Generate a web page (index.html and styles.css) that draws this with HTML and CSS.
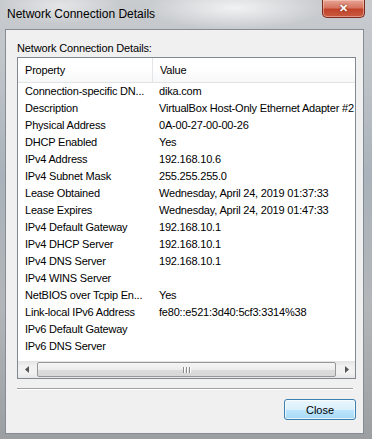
FILE: index.html
```html
<!DOCTYPE html>
<html>
<head>
    <meta charset="utf-8">
    <title>Network Connection Details</title>
    <link rel="stylesheet" href="styles.css">
</head>
<body>
    <div class="window">
        <div class="titlebar">
            <span class="title">Network Connection Details</span>
            <div class="close-x">&#x2715;</div>
        </div>
        <div class="client">
            <div class="label">Network Connection Details:</div>
            <div class="list">
                <div class="header">
                    <div class="prop">Property</div>
                    <div class="val">Value</div>
                </div>
                <div class="rows">
                    <div class="row"><div class="prop">Connection-specific DN...</div><div class="val">dika.com</div></div>
                    <div class="row"><div class="prop">Description</div><div class="val">VirtualBox Host-Only Ethernet Adapter #2</div></div>
                    <div class="row"><div class="prop">Physical Address</div><div class="val">0A-00-27-00-00-26</div></div>
                    <div class="row"><div class="prop">DHCP Enabled</div><div class="val">Yes</div></div>
                    <div class="row"><div class="prop">IPv4 Address</div><div class="val">192.168.10.6</div></div>
                    <div class="row"><div class="prop">IPv4 Subnet Mask</div><div class="val">255.255.255.0</div></div>
                    <div class="row"><div class="prop">Lease Obtained</div><div class="val">Wednesday, April 24, 2019 01:37:33</div></div>
                    <div class="row"><div class="prop">Lease Expires</div><div class="val">Wednesday, April 24, 2019 01:47:33</div></div>
                    <div class="row"><div class="prop">IPv4 Default Gateway</div><div class="val">192.168.10.1</div></div>
                    <div class="row"><div class="prop">IPv4 DHCP Server</div><div class="val">192.168.10.1</div></div>
                    <div class="row"><div class="prop">IPv4 DNS Server</div><div class="val">192.168.10.1</div></div>
                    <div class="row"><div class="prop">IPv4 WINS Server</div><div class="val"></div></div>
                    <div class="row"><div class="prop">NetBIOS over Tcpip En...</div><div class="val">Yes</div></div>
                    <div class="row"><div class="prop">Link-local IPv6 Address</div><div class="val">fe80::e521:3d40:5cf3:3314%38</div></div>
                    <div class="row"><div class="prop">IPv6 Default Gateway</div><div class="val"></div></div>
                    <div class="row"><div class="prop">IPv6 DNS Server</div><div class="val"></div></div>
                </div>
                <div class="hscroll">
                    <div class="arrow"><svg width="4" height="7" viewBox="0 0 4 7"><path d="M4 0 L0 3.5 L4 7 Z" fill="#555"/></svg></div>
                    <div class="thumb"><span class="grip"></span><span class="grip"></span><span class="grip"></span></div>
                    <div class="arrow"><svg width="4" height="7" viewBox="0 0 4 7"><path d="M0 0 L4 3.5 L0 7 Z" fill="#555"/></svg></div>
                </div>
            </div>
            <div class="separator"></div>
            <div class="buttons">
                <button class="button">Close</button>
            </div>
        </div>
    </div>
</body>
</html>
```
FILE: styles.css
```css
html, body {
    margin: 0;
    padding: 0;
    font-family: "Liberation Sans", Arial, sans-serif;
    background: #b9bec3;
}

.window {
    width: 372px;
    height: 439px;
    box-sizing: border-box;
    padding: 0 8px 5px 5px;
    display: flex;
    flex-direction: column;
    background:
        radial-gradient(ellipse 90px 22px at 235px 8px, rgba(255,255,255,0.75), rgba(255,255,255,0)),
        radial-gradient(ellipse 60px 18px at 60px 6px, rgba(255,255,255,0.5), rgba(255,255,255,0)),
        linear-gradient(180deg, #c9cccf 0, #bfc4c9 15%, #a9b2ba 40%, #b3b6b9 70%, #9c9fa2 100%);
}

.titlebar {
    height: 29px;
    display: flex;
    justify-content: space-between;
    align-items: flex-start;
}

.title {
    font-size: 12px;
    line-height: 14px;
    margin: 7px 0 0 2px;
    color: #000;
}

.close-x {
    width: 43px;
    height: 18px;
    flex: none;
    margin-right: -1px;
    box-sizing: border-box;
    border: 1px solid #7b2a1e;
    border-top: none;
    border-radius: 0 0 5px 5px;
    background: linear-gradient(180deg, #e6a595 0, #d77560 45%, #c0432a 55%, #c85a3e 100%);
    box-shadow: inset 0 0 0 1px rgba(255,220,210,0.45);
    color: #fff;
    font-size: 11px;
    font-weight: bold;
    line-height: 16px;
    text-align: center;
    text-shadow: 0 0 2px #6a1a10;
}

.client {
    flex: 1;
    background: #f0f0f0;
    border: 1px solid #858c93;
    padding: 11px 7px 0 11px;
    display: flex;
    flex-direction: column;
}

.label {
    font-size: 11px;
    line-height: 14px;
    margin-bottom: 2px;
    color: #000;
    letter-spacing: -0.15px;
}

.list {
    height: 322px;
    box-sizing: border-box;
    border: 1px solid #828790;
    background: #fff;
    display: flex;
    flex-direction: column;
    font-size: 11px;
    letter-spacing: -0.2px;
    color: #000;
    overflow: hidden;
}

.header {
    height: 25px;
    box-sizing: border-box;
    border-bottom: 1px solid #e2e3e5;
    background: linear-gradient(180deg, #fff 0, #fff 40%, #f7f8f9 100%);
    display: flex;
    align-items: stretch;
    line-height: 24px;
}

.header .prop {
    border-right: 1px solid #e3e5e7;
}

.prop {
    width: 127px;
    flex: none;
    padding-left: 7px;
    white-space: nowrap;
}

.val {
    padding-left: 7px;
    white-space: nowrap;
}

.rows {
    flex: 1;
}

.row {
    height: 17px;
    line-height: 17px;
    display: flex;
}

.hscroll {
    height: 17px;
    display: flex;
    align-items: stretch;
    background: linear-gradient(180deg, #e3e3e3 0, #f1f1f1 30%, #f1f1f1 70%, #e6e6e6 100%);
}

.arrow {
    width: 17px;
    display: flex;
    align-items: center;
    justify-content: center;
}

.thumb {
    flex: 1;
    margin: 1px 2px;
    border: 1px solid #979797;
    border-radius: 2px;
    background: linear-gradient(180deg, #f5f5f5 0, #ececec 50%, #dcdcdc 51%, #d8d8d8 100%);
    display: flex;
    align-items: center;
    justify-content: center;
    gap: 2px;
}

.grip {
    width: 1px;
    height: 6px;
    background: #8a8a8a;
    box-shadow: 1px 0 0 #fff;
}

.separator {
    margin: 9px 3px 0 0;
    height: 1px;
    background: #a0a0a0;
    border-bottom: 1px solid #fff;
}

.buttons {
    display: flex;
    justify-content: flex-end;
    margin-top: 9px;
}

.button {
    width: 72px;
    height: 21px;
    box-sizing: border-box;
    border: 1px solid #3c7fb1;
    border-radius: 3px;
    background: linear-gradient(180deg, #eaf6fd 0, #d9f0fc 50%, #bee6fd 51%, #a7d9f5 100%);
    box-shadow: inset 0 0 0 1px rgba(255,255,255,0.7);
    font-family: "Liberation Sans", Arial, sans-serif;
    font-size: 11px;
    color: #000;
    padding: 0;
}
```
